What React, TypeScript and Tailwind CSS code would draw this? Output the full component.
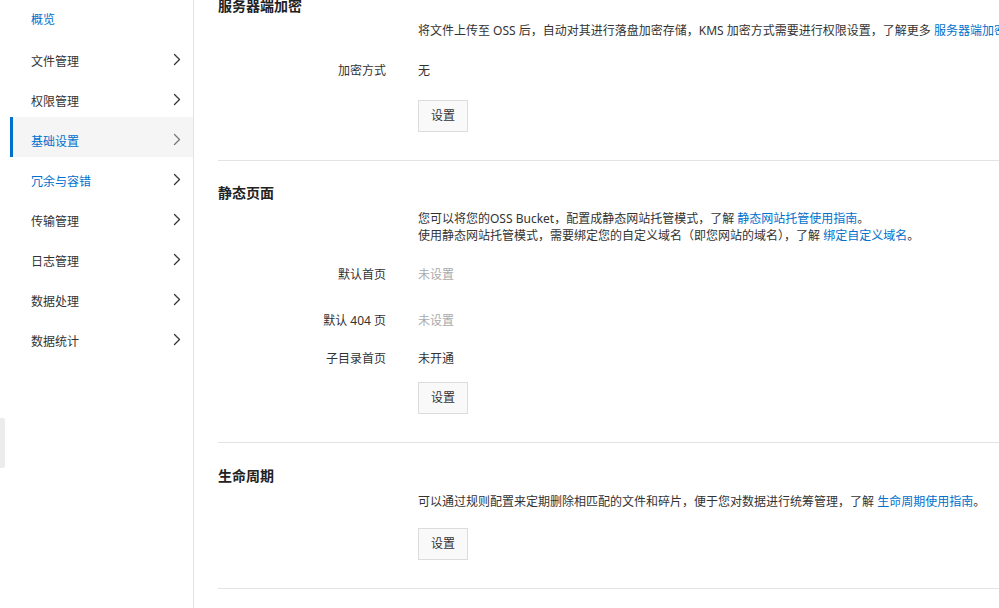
import type { ReactNode } from 'react';

const font = { fontFamily: '"Noto Sans", "Noto Sans CJK SC", sans-serif' };

interface NavItem {
  label: string;
  arrow?: boolean;
  tone?: 'link' | 'normal';
  active?: boolean;
}

const navItems: NavItem[] = [
  { label: '文件管理', arrow: true },
  { label: '权限管理', arrow: true },
  { label: '基础设置', arrow: true, active: true },
  { label: '冗余与容错', arrow: true, tone: 'link' },
  { label: '传输管理', arrow: true },
  { label: '日志管理', arrow: true },
  { label: '数据处理', arrow: true },
  { label: '数据统计', arrow: true },
];

function Chevron({ muted }: { muted?: boolean }) {
  return (
    <svg width="8" height="13" viewBox="0 0 8 13" fill="none" className="shrink-0">
      <path
        d="M1.5 1.5 L6.5 6.5 L1.5 11.5"
        stroke={muted ? '#777' : '#333'}
        strokeWidth="1.3"
        strokeLinecap="round"
        strokeLinejoin="round"
      />
    </svg>
  );
}

function Sidebar() {
  return (
    <aside className="relative w-[194px] shrink-0 border-r border-[#e3e3e3] bg-white">
      <div className="ml-[10px]">
        <div className="flex h-[37px] items-center pl-[21px] pt-[3px] text-[12px] text-[#0070cc]">概览</div>
        {navItems.map((item) => (
          <div
            key={item.label}
            className={
              item.active
                ? 'flex h-[40px] items-center justify-between border-l-[3px] border-[#0070cc] bg-[#f5f5f5] pl-[18px] pr-[12px] pt-[7px] text-[12px] text-[#0070cc]'
                : 'flex h-[40px] items-center justify-between pl-[21px] pr-[12px] pt-[7px] text-[12px] ' +
                  (item.tone === 'link' ? 'text-[#0070cc]' : 'text-[#333]')
            }
          >
            <span className="translate-y-[1px]">{item.label}</span>
            {item.arrow && (
              <span className="-translate-y-[1px]">
                <Chevron muted={item.active} />
              </span>
            )}
          </div>
        ))}
      </div>
      <div className="absolute left-0 top-[418px] h-[50px] w-[5px] rounded-r-[2px] bg-[#ececec]" />
    </aside>
  );
}

function Row({ label, children, className }: { label?: string; children: ReactNode; className?: string }) {
  return (
    <div className={'flex items-start ' + (className ?? '')}>
      <div className="w-[168px] shrink-0 text-right text-[12px] leading-[17px] text-[#333]">{label}</div>
      <div className="ml-[32px] whitespace-nowrap text-[12px] leading-[17px] text-[#333]">{children}</div>
    </div>
  );
}

function SetButton({ className }: { className?: string }) {
  return (
    <div className={'flex ' + (className ?? '')}>
      <div className="w-[200px] shrink-0" />
      <button className="h-[32px] w-[50px] border border-[#dcdcdc] bg-[#f9f9f9] text-[12px] text-[#333]">设置</button>
    </div>
  );
}

function Heading({ children }: { children: ReactNode }) {
  return <h3 className="text-[14px] font-bold leading-[20px] text-[#222]">{children}</h3>;
}

function Link({ children }: { children: ReactNode }) {
  return <span className="text-[#0070cc]">{children}</span>;
}

export default function App() {
  return (
    <div className="flex h-[608px] w-[999px] overflow-hidden bg-white" style={font}>
      <Sidebar />
      <main className="min-w-0 flex-1 overflow-hidden pl-[24px]">
        <section className="-mt-[4px] border-b border-[#e3e3e3] pb-[28px]">
          <Heading>服务器端加密</Heading>
          <Row className="mt-[6px]">
            将文件上传至 OSS 后，自动对其进行落盘加密存储，KMS 加密方式需要进行权限设置，了解更多 <Link>服务器端加密</Link>
          </Row>
          <Row label="加密方式" className="mt-[23px]">
            无
          </Row>
          <SetButton className="mt-[21px]" />
        </section>

        <section className="border-b border-[#e3e3e3] pb-[28px] pt-[22px]">
          <Heading>静态页面</Heading>
          <Row className="mt-[7px]">
            <div>
              您可以将您的OSS Bucket，配置成静态网站托管模式，了解 <Link>静态网站托管使用指南</Link>。
            </div>
            <div>
              使用静态网站托管模式，需要绑定您的自定义域名（即您网站的域名），了解 <Link>绑定自定义域名</Link>。
            </div>
          </Row>
          <Row label="默认首页" className="mt-[22px]">
            <span className="text-[#aaa]">未设置</span>
          </Row>
          <Row label="默认 404 页" className="mt-[29px]">
            <span className="text-[#aaa]">未设置</span>
          </Row>
          <Row label="子目录首页" className="mt-[21px]">
            未开通
          </Row>
          <SetButton className="mt-[15px]" />
        </section>

        <section className="border-b border-[#e3e3e3] pb-[28px] pt-[23px]">
          <Heading>生命周期</Heading>
          <Row className="mt-[7px]">
            可以通过规则配置来定期删除相匹配的文件和碎片，便于您对数据进行统筹管理，了解 <Link>生命周期使用指南</Link>。
          </Row>
          <SetButton className="mt-[18px]" />
        </section>
      </main>
    </div>
  );
}
